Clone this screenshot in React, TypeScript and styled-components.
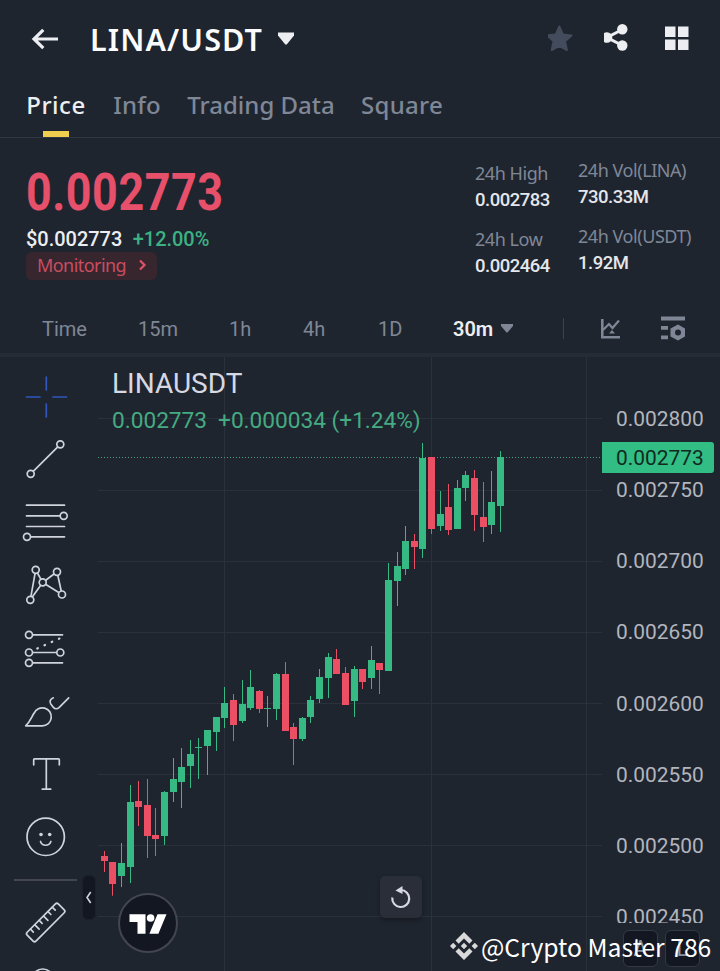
import React from 'react';
import styled, { createGlobalStyle } from 'styled-components';

const UP = '#37b983';
const DOWN = '#ea4f64';

const GlobalStyle = createGlobalStyle`
  *, *::before, *::after { box-sizing: border-box; }
  body { margin: 0; background: #1f252f; }
  svg { display: block; flex: none; }
`;

const Screen = styled.main`
  width: 720px;
  height: 971px;
  overflow: hidden;
  display: flex;
  flex-direction: column;
  background: #1f252f;
  font-family: 'Noto Sans', sans-serif;
  white-space: nowrap;
`;

const Header = styled.header`
  display: flex;
  align-items: center;
  height: 77px;
  padding: 0 28px 0 30px;
`;

const Pair = styled.h1`
  margin: 0 0 0 30px;
  width: 188px;
  font-size: 30.5px;
  line-height: 40px;
  font-weight: 600;
  letter-spacing: 1.1px;
  color: #fbfcfd;
`;

const HeaderActions = styled.div`
  display: flex;
  align-items: center;
  gap: 28px;
  margin: -1px 0 0 auto;
`;

const Tabs = styled.nav`
  display: flex;
  height: 61px;
  padding-left: 26px;
  gap: 27px;
  border-bottom: 1px solid #303642;
`;

const Tab = styled.div<{ $active?: boolean; $width: number; $track?: number }>`
  display: flex;
  flex-direction: column;
  align-items: center;
  justify-content: space-between;
  width: ${p => p.$width}px;
  padding-top: 11px;
  font-size: 24px;
  line-height: 34px;
  font-weight: 500;
  letter-spacing: ${p => p.$track ?? 0}px;
  color: ${p => (p.$active ? '#eceef2' : '#7f8796')};
  &::after {
    content: '';
    width: 26px;
    height: 6px;
    background: ${p => (p.$active ? '#f0cf4f' : 'transparent')};
  }
`;

const Summary = styled.section`
  display: flex;
  justify-content: space-between;
  height: 164px;
  padding: 0 20px 0 26px;
`;

const PriceBlock = styled.div`
  display: flex;
  flex-direction: column;
  align-items: flex-start;
  font-family: Roboto, sans-serif;
`;

const LastPrice = styled.div`
  height: 60px;
  margin-top: 25px;
  font-size: 51px;
  line-height: 60px;
  font-weight: 700;
  letter-spacing: 0.6px;
  color: #e6506a;
  transform: scaleX(0.88);
  transform-origin: left;
`;

const SubPrice = styled.div`
  display: flex;
  gap: 11px;
  margin-top: 4px;
  height: 24px;
  font-size: 21px;
  line-height: 24px;
  font-weight: 500;
  color: #eceef2;
  transform: scaleX(0.95);
  transform-origin: left;
`;

const Change = styled.span`
  color: #3cb283;
`;

const Tag = styled.div`
  display: flex;
  align-items: center;
  gap: 12px;
  width: 131px;
  height: 28px;
  margin-top: 1px;
  padding: 0 0 2px 11px;
  border-radius: 6px;
  background: #38262f;
  color: #c94d60;
  font-family: 'Noto Sans', sans-serif;
  font-size: 18px;
  letter-spacing: -0.55px;
`;

const Stats = styled.dl`
  display: flex;
  gap: 28px;
  margin: 0;
`;

const StatColumn = styled.div<{ $top: number; $width: number }>`
  display: flex;
  flex-direction: column;
  gap: 14px;
  width: ${p => p.$width}px;
  padding-top: ${p => p.$top}px;
`;

const Stat = styled.div`
  height: 52px;
`;

const StatName = styled.dt`
  font-size: 18px;
  line-height: 26px;
  letter-spacing: -0.45px;
  color: #7f8796;
`;

const StatValue = styled.dd`
  margin: 1px 0 0;
  font-family: Roboto, sans-serif;
  font-size: 18.5px;
  line-height: 26px;
  font-weight: 500;
  letter-spacing: -0.5px;
  color: #e4e7ec;
`;

const Intervals = styled.nav`
  display: flex;
  align-items: center;
  height: 51px;
  padding: 2px 34px 0 42px;
  font-size: 20px;
  color: #7f8796;
  font-family: Roboto, sans-serif;
`;

const Interval = styled.span<{ $width: number; $active?: boolean }>`
  width: ${p => p.$width}px;
  font-weight: ${p => (p.$active ? 600 : 400)};
  color: ${p => (p.$active ? '#eceef2' : '#7f8796')};
`;

const Separator = styled.span`
  width: 1px;
  height: 21px;
  margin: 0 36px 0 50px;
  background: #3c434f;
`;

const ChartArea = styled.section`
  position: relative;
  display: flex;
  flex: 1;
  min-height: 0;
  border-top: 4px solid #262c36;
  overflow: hidden;
`;

const Toolbar = styled.aside`
  display: flex;
  flex-direction: column;
  width: 98px;
  padding: 8px 0 0 22px;
`;

const Tool = styled.div`
  display: flex;
  flex: none;
  align-items: center;
  height: 63px;
`;

const ToolDivider = styled.div`
  flex: none;
  width: 63px;
  height: 2px;
  margin: 10px 0 9px -8px;
  background: #434651;
`;

const PriceAxis = styled.div`
  width: 118px;
  height: 566px;
  padding: 26px 0 0 14px;
  overflow: hidden;
  font-family: Roboto, sans-serif;
  font-size: 20.9px;
  color: #b2b5be;
`;

const AxisLabel = styled.div`
  height: 71.14px;
  line-height: 72px;
`;

const Legend = styled.div`
  position: absolute;
  left: 112px;
  top: 9px;
  font-family: Roboto, sans-serif;
  color: #d6d9e2;
  font-size: 28px;
  line-height: 36px;
`;

const LegendValues = styled.div`
  display: flex;
  gap: 11px;
  margin-top: 3px;
  font-size: 22.65px;
  line-height: 32px;
  color: #45ab82;
`;

const CurrentPrice = styled.div`
  position: absolute;
  left: 602px;
  top: 85px;
  width: 112px;
  height: 31px;
  padding-left: 14px;
  border-radius: 0 3px 3px 0;
  background: #31bd83;
  color: #12291f;
  font-family: Roboto, sans-serif;
  font-size: 20.9px;
  line-height: 33px;
`;

const Collapse = styled.button`
  position: absolute;
  left: 82px;
  top: 518px;
  width: 14px;
  height: 45px;
  padding: 0;
  border: 1px solid #1b202b;
  border-radius: 6px;
  background: #131722;
`;

const Brand = styled.div`
  position: absolute;
  left: 118px;
  top: 536px;
  width: 60px;
  height: 60px;
  border: 2px solid #434651;
  border-radius: 50%;
  background: #131722;
`;

const Reset = styled.button`
  position: absolute;
  left: 380px;
  top: 519px;
  width: 42px;
  height: 42px;
  padding: 0;
  border: 0;
  border-radius: 5px;
  background: #2a2e39;
  box-shadow: 0 2px 4px rgba(0, 0, 0, 0.35);
`;

const ScaleButtons = styled.div`
  position: absolute;
  left: 623px;
  top: 573px;
  display: flex;
  gap: 7px;
`;

const ScaleButton = styled.button`
  width: 35px;
  height: 37px;
  padding: 0;
  border: 1px solid #343844;
  border-radius: 6px;
  background: #131722;
  color: #8d909b;
  font: 22px Roboto, sans-serif;
`;

const Watermark = styled.div`
  position: absolute;
  left: 450px;
  top: 571px;
  display: flex;
  align-items: center;
  gap: 3px;
  height: 36px;
  color: #fff;
  font-family: 'Noto Sans CJK SC', sans-serif;
  font-size: 24.7px;
  line-height: 36px;
`;

type Candle = [x: number, top: number, bottom: number, high: number, low: number, up: 0 | 1];

const candles: Candle[] = [
  [104.5, 856, 861, 851, 872, 0], [112.5, 862, 884, 862, 895.7, 0], [121.5, 863, 876, 843, 887, 1],
  [130.5, 802, 867, 785, 883, 1], [138.5, 801, 807, 781, 826, 0], [147.5, 805, 836, 779, 858, 0],
  [155.5, 835, 839, 808, 856, 0], [164.5, 792, 836, 791, 845, 1], [173.5, 779, 792, 758, 802, 1],
  [181.5, 767, 782, 748, 808, 1], [190.5, 754, 766, 740, 788, 1], [198.5, 747, 748, 738, 779, 1],
  [207.5, 730, 746, 730, 775, 1], [216.5, 717, 732, 717, 751, 1], [224.5, 703, 718, 687, 728, 1],
  [233.5, 700, 725, 694, 741, 0], [242.5, 704, 721, 680, 723, 1], [250.5, 687, 708, 670, 710, 1],
  [259.5, 691, 709, 690, 713, 0], [267.5, 708, 709, 696, 727, 1], [276.5, 674, 709, 673, 720, 1],
  [285.5, 674, 731, 662, 731, 0], [293.5, 727, 739, 723, 765, 0], [302.5, 718, 739, 717, 741, 1],
  [310.5, 700, 717, 696, 723, 1], [319.5, 677, 699, 669, 703, 1], [328.5, 657, 678, 653, 698, 1],
  [336.5, 659, 674, 649, 674, 0], [345.5, 673, 705, 667, 705, 0], [354.5, 669, 701, 666, 717, 1],
  [362.5, 669, 682, 669, 689, 0], [371.5, 660, 678, 646, 689, 1], [379.5, 663, 670, 663, 694, 0],
  [388.5, 580, 671, 563, 671, 1], [397.5, 566, 581, 552, 606, 1], [405.5, 541, 569, 526, 575, 1],
  [414.5, 541, 547, 534, 569, 0], [422.5, 458, 549, 443, 558, 1], [431.5, 457, 529, 457, 534, 0],
  [440.5, 514, 526, 491, 531, 1], [448.5, 507, 530, 484, 535, 0], [457.5, 488, 529, 480, 529, 1],
  [465.5, 475, 488, 471, 501, 1], [474.5, 478, 515, 470, 531, 0], [483.5, 517, 527, 482, 542, 0],
  [491.5, 502, 525, 471, 534, 1], [500.5, 457, 506, 451, 532, 1],
];

const gridRows = [418.5, 490.5, 561.5, 632.5, 703.5, 774.5, 845.5, 916.5];
const gridColumns = [224.5, 431.5, 586.5];
const axisPrices = ['0.002800', '0.002750', '0.002700', '0.002650', '0.002600', '0.002550', '0.002500', '0.002450'];

const CandleChart = () => (
  <svg width="504" height="614" viewBox="98 357 504 614">
    <g stroke="#2b313b" strokeWidth="1">
      {gridRows.map(y => <line key={y} x1="98" x2="602" y1={y} y2={y} />)}
      {gridColumns.map(x => <line key={x} x1={x} x2={x} y1="357" y2="971" />)}
    </g>
    <line x1="98" x2="602" y1="457.5" y2="457.5" stroke="#449f80" strokeDasharray="1 2" />
    {candles.map(([x, top, bottom, high, low, up]) => (
      <g key={x} fill={up ? UP : DOWN}>
        <rect x={x - 0.5} y={high} width="1" height={low - high} />
        <rect x={x - 3.5} y={top} width="7" height={bottom - top} />
      </g>
    ))}
  </svg>
);

const ToolIcon = ({ children, color = '#cfd3dc' }: { children: React.ReactNode; color?: string }) => (
  <Tool>
    <svg width="48" height="48" viewBox="0 0 48 48" fill="none" stroke={color} strokeWidth="1.7" strokeLinecap="round" strokeLinejoin="round">
      {children}
    </svg>
  </Tool>
);

const Knob = ({ x, y }: { x: number; y: number }) => <circle cx={x} cy={y} r="3.5" fill="#1f252f" />;

const DrawingTools = () => (
  <Toolbar>
    <ToolIcon color="#3156bd"><path d="M24.3 4v13M24.3 31v13M4.5 24H18M31 24h13.500" /></ToolIcon>
    <ToolIcon><path d="M8.700 37.800 38.300 8.300" /><Knob x={38.3} y={8.3} /><Knob x={8.7} y={37.8} /></ToolIcon>
    <ToolIcon>
      <path d="M4.500 6.200h38M4.500 16.800h37M4.500 27.500h38M5 37.800h37.500" />
      <Knob x={41.7} y={16.8} /><Knob x={5} y={37.8} />
    </ToolIcon>
    <ToolIcon>
      <path d="M8.300 37.800 13.700 7.800l7 12.700L35 9.800l5 22.700-19.300-12z" />
      <Knob x={13.7} y={7.8} /><Knob x={35} y={9.8} /><Knob x={20.7} y={20.3} /><Knob x={8.3} y={37.8} /><Knob x={40} y={32.5} />
    </ToolIcon>
    <ToolIcon>
      <path d="M7 9.800h33.500M7 27.500h31M7 37.800h33.500" />
      <path d="M15.300 23.500 37.500 13.500" strokeWidth="2.200" strokeDasharray="0.6 7.300" />
      <Knob x={7} y={9.8} /><Knob x={7} y={27.5} /><Knob x={38.3} y={27.5} /><Knob x={7} y={37.8} />
    </ToolIcon>
    <ToolIcon>
      <path d="M3.700 37.800C8.500 33 9.500 29 12 25.300a9 9 0 1 1 8.300 12.500z" />
      <path d="M31.300 9.800c-3.300 1.400-4 4-2.500 6.200l2.600 3.400c1.600 1.800 4 1.700 5.600.3L46.700 9.800" />
    </ToolIcon>
    <ToolIcon><path d="M11.700 13.800V8.600q0-.8.800-.8h24q.8 0 .8.800v5.200M24.300 8v30.200M20.300 38.200h8.400" /></ToolIcon>
    <ToolIcon>
      <circle cx="23.700" cy="22.800" r="18.700" />
      <path d="M18.500 27.500c1.800 5 8.500 5 10.400 0" />
      <g fill="#cfd3dc" stroke="none"><circle cx="19" cy="20.500" r="1.800" /><circle cx="27.700" cy="20.500" r="1.800" /></g>
    </ToolIcon>
    <ToolDivider />
    <ToolIcon>
      <g transform="translate(23.700 24.500) rotate(-45)">
        <rect x="-22" y="-6.200" width="44" height="12.400" rx="2" />
        <path d="M-15.500-6v4M-9.300-6v6M-3.100-6v4M3.100-6v6M9.300-6v4M15.500-6v4" />
      </g>
    </ToolIcon>
    <ToolIcon><circle cx="20.700" cy="19" r="11" /></ToolIcon>
  </Toolbar>
);

const App = () => (
  <Screen>
    <GlobalStyle />
    <Header>
      <svg width="30" height="24" viewBox="0 0 30 24" fill="none" stroke="#eceef2" strokeWidth="3.200">
        <path d="M28 12H4M13.300 2.800 4 12l9.300 9.200" />
      </svg>
      <Pair>LINA/USDT</Pair>
      <svg width="16" height="13" viewBox="0 0 16 13" fill="#eceef2"><path d="M0 .5h16v3L8.700 12.400H7.300L0 3.500z" /></svg>
      <HeaderActions>
        <svg width="28" height="28" viewBox="1 0 28 28" fill="#434c5c" stroke="#434c5c" strokeWidth="2" strokeLinejoin="round">
          <path d="m12 2.500 3.500 7.900 8.700 1-6.500 5.900 1.900 8.700L12 21.900 4.400 26l1.900-8.700-6.500-5.900 8.700-1z" transform="translate(0.300 0)" />
        </svg>
        <svg width="28" height="28" viewBox="3 0 28 28" fill="#eceef2">
          <path d="M21.500 5.500 6 13.500l15.500 8" fill="none" stroke="#eceef2" strokeWidth="3" />
          <circle cx="21.300" cy="5.300" r="5.200" /><circle cx="6" cy="13.500" r="5.300" /><circle cx="21.300" cy="21.500" r="5.200" />
        </svg>
        <svg width="32" height="26" viewBox="0 0 32 26" fill="#eceef2">
          <path d="M5 1.500h10.500V12H5zM18 1.500h10.500V12H18zM5 14.500h10.500V25H5zM18 14.500h10.500V25H18z" />
        </svg>
      </HeaderActions>
    </Header>
    <Tabs>
      <Tab $active $width={60} $track={0.5}>Price</Tab>
      <Tab $width={48} $track={0.2}>Info</Tab>
      <Tab $width={146}>Trading Data</Tab>
      <Tab $width={82} $track={0.3}>Square</Tab>
    </Tabs>
    <Summary>
      <PriceBlock>
        <LastPrice>0.002773</LastPrice>
        <SubPrice>$0.002773<Change>+12.00%</Change></SubPrice>
        <Tag>
          Monitoring
          <svg width="9" height="12" viewBox="0 0 9 12" fill="none" stroke="#dc5269" strokeWidth="2.200"><path d="m2 1.500 4.500 4.500L2 10.500" /></svg>
        </Tag>
      </PriceBlock>
      <Stats>
        <StatColumn $top={22} $width={75}>
          <Stat><StatName>24h High</StatName><StatValue>0.002783</StatValue></Stat>
          <Stat><StatName>24h Low</StatName><StatValue>0.002464</StatValue></Stat>
        </StatColumn>
        <StatColumn $top={19} $width={122}>
          <Stat><StatName>24h Vol(LINA)</StatName><StatValue>730.33M</StatValue></Stat>
          <Stat><StatName>24h Vol(USDT)</StatName><StatValue>1.92M</StatValue></Stat>
        </StatColumn>
      </Stats>
    </Summary>
    <Intervals>
      <Interval $width={96}>Time</Interval>
      <Interval $width={91}>15m</Interval>
      <Interval $width={74}>1h</Interval>
      <Interval $width={75}>4h</Interval>
      <Interval $width={75}>1D</Interval>
      <Interval $width={48} $active>30m</Interval>
      <svg width="12" height="9" viewBox="0 0 12 9" fill="#7f8796"><path d="M0 0h12v2L6.500 8.500h-1L0 2z" /></svg>
      <Separator />
      <svg width="21" height="22" viewBox="0 1 21 22" fill="none" stroke="#7f8796" strokeWidth="2.600">
        <path d="M2.300 2v18.300H20" /><path d="M3 13 9 7l3.500 4L19 3.500" strokeWidth="2.200" /><path d="m9 16.500 3-3.500 3 3.500z" fill="#7f8796" stroke="none" />
      </svg>
      <svg width="64" height="26" viewBox="-39 1 64 26" fill="#7f8796">
        <path d="M1 1.500h24v4H1zM1 11h7v3.800H1zM1 20.500h7v3.800H1z" />
        <path fillRule="evenodd" d="m18 9.500 7 4v8l-7 4-7.500-4v-8zM18 14.500a3 3 0 1 0 0 6 3 3 0 0 0 0-6z" />
      </svg>
    </Intervals>
    <ChartArea>
      <DrawingTools />
      <CandleChart />
      <PriceAxis>{axisPrices.map(price => <AxisLabel key={price}>{price}</AxisLabel>)}</PriceAxis>
      <Legend>
        LINAUSDT
        <LegendValues><span>0.002773</span><span>+0.000034 (+1.24%)</span></LegendValues>
      </Legend>
      <CurrentPrice>0.002773</CurrentPrice>
      <Collapse aria-label="Hide drawing tools">
        <svg width="12" height="43" viewBox="0 0 12 43" fill="none" stroke="#cfd3dc" strokeWidth="1.600"><path d="M7.700 16 4 21.500 7.700 27" /></svg>
      </Collapse>
      <Brand>
        <svg width="56" height="56" viewBox="0 0 56 56" fill="#fff">
          <path d="M9.500 19.300h16v19.400h-8v-11.700h-8zM37.500 19.300h9L38.400 38.700h-9z" /><circle cx="30.600" cy="23" r="3.800" />
        </svg>
      </Brand>
      <Reset aria-label="Reset chart">
        <svg width="42" height="42" viewBox="0 0 42 42" fill="none" stroke="#d6d9e2" strokeWidth="2.200">
          <path d="M12.300 21.500a8.500 8.500 0 1 0 8.500-7.500" /><path d="m15.500 14.500 7-4.500v8z" fill="#d6d9e2" stroke="none" />
        </svg>
      </Reset>
      <ScaleButtons><ScaleButton>A</ScaleButton><ScaleButton>L</ScaleButton></ScaleButtons>
      <Watermark>
        <svg width="28" height="28" viewBox="0 0 28 28" fill="#d9d9d9">
          <path d="m14 0 8.500 8.500-3.200 3.200L14 6.400l-5.300 5.300-3.200-3.200zM14 28l8.500-8.500-3.200-3.200-5.300 5.300-5.300-5.300-3.200 3.200zM14 10.800l3.200 3.200-3.200 3.200-3.200-3.200zM3.200 10.800 6.400 14l-3.200 3.200L0 14zM24.800 10.800 28 14l-3.200 3.200-3.200-3.200z" />
        </svg>
        @Crypto Master 786
      </Watermark>
    </ChartArea>
  </Screen>
);

export default App;
